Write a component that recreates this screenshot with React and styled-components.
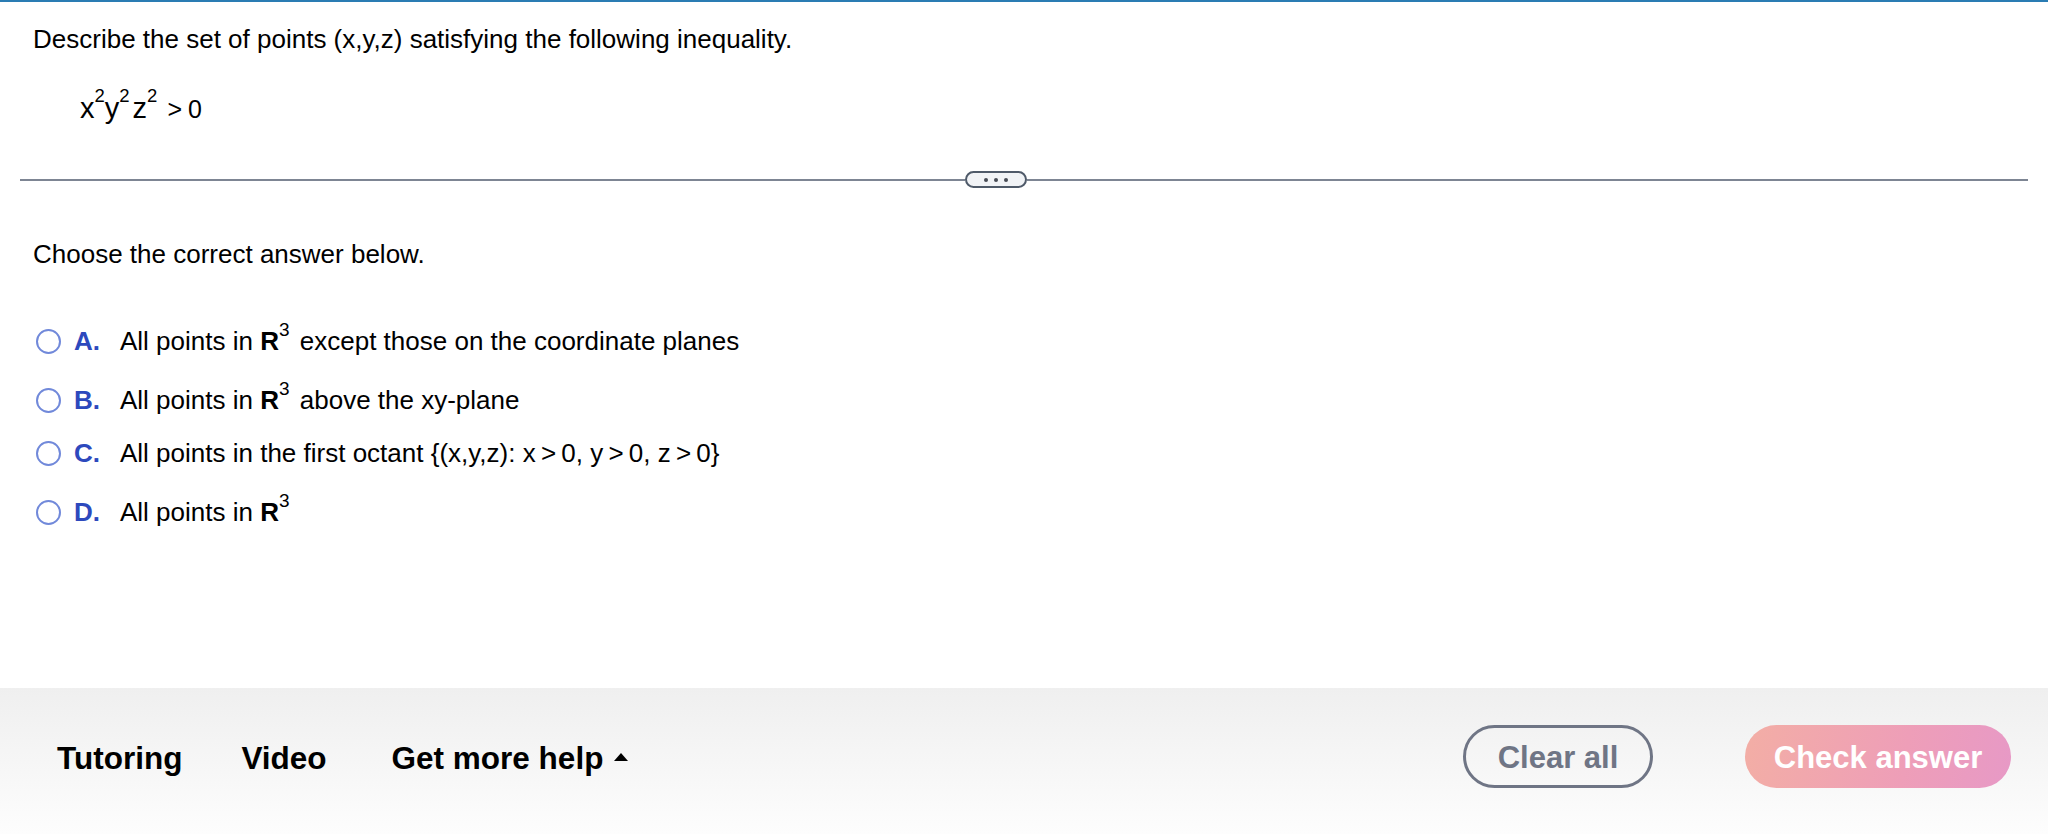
import styled, { createGlobalStyle } from "styled-components"

const GlobalStyle = createGlobalStyle`
  html, body {
    margin: 0;
    padding: 0;
    background: #fff;
  }
  body {
    font-family: "Liberation Sans", Arial, Helvetica, sans-serif;
    color: #000;
  }
`

const options = [
  { letter: "A", before: "All points in ", bold: "R", sup: "3", after: " except those on the coordinate planes" },
  { letter: "B", before: "All points in ", bold: "R", sup: "3", after: " above the xy-plane" },
  { letter: "C", before: "All points in the first octant {(x,y,z): x\u2009>\u20090, y\u2009>\u20090, z\u2009>\u20090}" },
  { letter: "D", before: "All points in ", bold: "R", sup: "3" },
]

export default function App() {
  return (
    <>
      <GlobalStyle />
      <Page>
        <Question>
          <Prompt>Describe the set of points (x,y,z) satisfying the following inequality.</Prompt>
          <Equation>
            <Var>x</Var><Exp>2</Exp>
            <Var>y</Var><Exp $gap>2</Exp>
            <Var>z</Var><Exp>2</Exp>
            <Rel>&gt;</Rel><Num>0</Num>
          </Equation>

          <Divider>
            <Rule />
            <MorePill>
              <Dot /><Dot /><Dot />
            </MorePill>
            <Rule />
          </Divider>

          <Prompt $top={51}>Choose the correct answer below.</Prompt>

          <Choices>
            {options.map((o) => (
              <Choice key={o.letter} $tall={!!o.sup}>
                <Radio />
                <Letter>{o.letter}.</Letter>
                <ChoiceText>
                  {o.before}
                  {o.bold && <b>{o.bold}</b>}
                  {o.sup && <Sup>{o.sup}</Sup>}
                  {o.after}
                </ChoiceText>
              </Choice>
            ))}
          </Choices>
        </Question>

        <Footer>
          <HelpLinks>
            <HelpLink>Tutoring</HelpLink>
            <HelpLink>Video</HelpLink>
            <HelpLink $shift>
              Get more help<Caret />
            </HelpLink>
          </HelpLinks>
          <Actions>
            <ClearButton>Clear all</ClearButton>
            <CheckButton>Check answer</CheckButton>
          </Actions>
        </Footer>
      </Page>
    </>
  )
}

const Page = styled.div`
  height: 834px;
  display: flex;
  flex-direction: column;
  border-top: 2px solid #2a7cb3;
  box-sizing: border-box;
  overflow: hidden;
`

const Question = styled.main`
  flex: 1;
  padding: 22px 20px 0;
`

const Prompt = styled.p`
  margin: ${(p) => p.$top || 0}px 0 0 13px;
  font-size: 26px;
  line-height: 30px;
`

const Equation = styled.div`
  margin: 37px 0 0 60px;
  font-size: 29px;
  line-height: 34px;
  height: 34px;
`

const Var = styled.span``

const Exp = styled.span`
  font-size: 18.5px;
  line-height: 0;
  vertical-align: 16px;
  margin-right: ${(p) => (p.$gap ? 3 : 0)}px;
`

const Rel = styled.span`
  font-size: 25px;
  line-height: 0;
  margin-left: 10px;
`

const Num = styled.span`
  font-size: 25px;
  line-height: 0;
  margin-left: 6px;
`

const Divider = styled.div`
  margin-top: 46px;
  display: grid;
  grid-template-columns: 945px auto 1fr;
  align-items: center;
`

const Rule = styled.div`
  height: 2px;
  background: #7d8593;
`

const MorePill = styled.div`
  width: 62px;
  height: 17px;
  box-sizing: border-box;
  border: 2px solid #4f5a69;
  border-radius: 9px;
  background: #f1f3f6;
  display: flex;
  align-items: center;
  justify-content: center;
  gap: 6px;
`

const Dot = styled.span`
  width: 4px;
  height: 4px;
  border-radius: 50%;
  background: #474c55;
`

const Choices = styled.ul`
  list-style: none;
  margin: 57px 0 0 16px;
  padding: 0;
`

const Choice = styled.li`
  display: flex;
  align-items: center;
  height: 30px;
  margin-top: ${(p) => (p.$tall ? 29 : 23)}px;
  &:first-child {
    margin-top: ${(p) => (p.$tall ? 12 : 0)}px;
  }
`

const Radio = styled.span`
  width: 25px;
  height: 25px;
  box-sizing: border-box;
  border: 2.5px solid #7189da;
  border-radius: 50%;
  flex: none;
  margin-right: 13px;
`

const Letter = styled.span`
  width: 46px;
  flex: none;
  font-size: 26px;
  line-height: 30px;
  font-weight: 700;
  color: #2d49bd;
`

const ChoiceText = styled.span`
  font-size: 26px;
  line-height: 30px;
  white-space: nowrap;
`

const Sup = styled.span`
  font-size: 19px;
  line-height: 0;
  vertical-align: 14px;
  margin-right: 3px;
`

const Footer = styled.footer`
  height: 146px;
  box-sizing: border-box;
  padding: 37px 37px 0 57px;
  display: flex;
  justify-content: space-between;
  align-items: flex-start;
  background: linear-gradient(180deg, #efefef 0%, #fdfdfd 100%);
`

const HelpLinks = styled.nav`
  display: flex;
  align-items: center;
  gap: 59px;
  height: 63px;
  padding-top: 4px;
  box-sizing: border-box;
`

const HelpLink = styled.span`
  display: inline-flex;
  align-items: center;
  margin-left: ${(p) => (p.$shift ? 6 : 0)}px;
  font-size: 31.5px;
  font-weight: 700;
  color: #000;
  white-space: nowrap;
`

const Caret = styled.span`
  display: inline-block;
  width: 0;
  height: 0;
  margin-left: 11px;
  margin-top: -4px;
  border-left: 7.5px solid transparent;
  border-right: 7.5px solid transparent;
  border-bottom: 8px solid #000;
`

const Actions = styled.div`
  display: flex;
  gap: 92px;
`

const PillButton = styled.button`
  height: 63px;
  box-sizing: border-box;
  border-radius: 32px;
  font-family: inherit;
  font-size: 31px;
  font-weight: 700;
  padding: 3px 0 0;
  cursor: pointer;
`

const ClearButton = styled(PillButton)`
  width: 190px;
  background: transparent;
  border: 3px solid #6f7585;
  color: #6f7585;
`

const CheckButton = styled(PillButton)`
  width: 266px;
  border: none;
  color: #fff;
  background: linear-gradient(100deg, #f3aea5 0%, #ee9eb8 60%, #e799c6 100%);
`
